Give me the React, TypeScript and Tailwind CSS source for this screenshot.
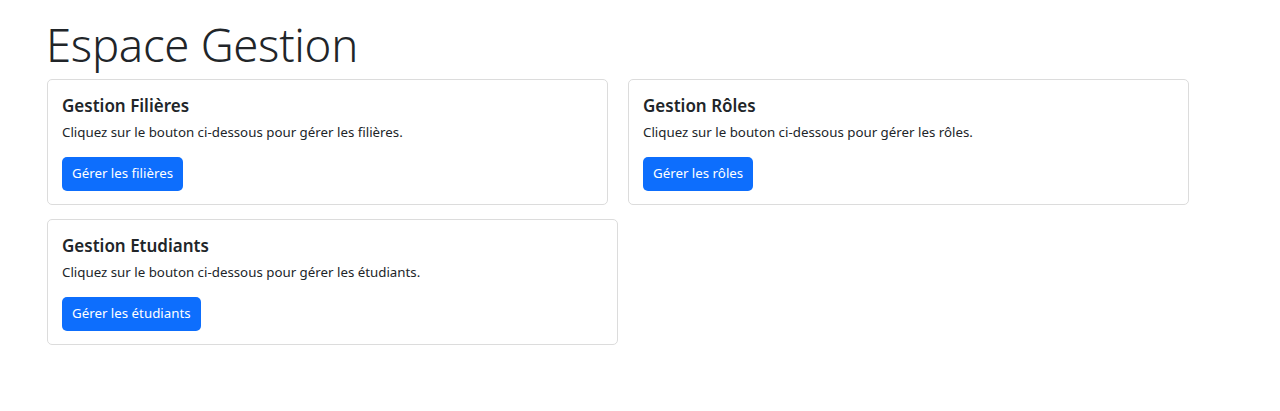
export default function App() {
  const cards = [
    { title: 'Gestion Filières', text: 'Cliquez sur le bouton ci-dessous pour gérer les filières.', label: 'Gérer les filières' },
    { title: 'Gestion Rôles', text: 'Cliquez sur le bouton ci-dessous pour gérer les rôles.', label: 'Gérer les rôles' },
  ]

  return (
    <div className="min-h-screen bg-white text-[#212529] font-['Noto_Sans',sans-serif] px-[47px] pt-[17px]">
      <h1 className="text-[45.5px] font-light leading-[55px] tracking-[-0.3px] -ml-[1px]">Espace Gestion</h1>

      {/* Row 1 */}
      <div className="flex gap-[20px] mt-[7px]">
        {cards.map((c) => (
          <Card key={c.title} title={c.title} text={c.text} label={c.label} width="w-[561px]" />
        ))}
      </div>

      {/* Row 2 */}
      <div className="flex mt-[14px]">
        <Card
          title="Gestion Etudiants"
          text="Cliquez sur le bouton ci-dessous pour gérer les étudiants."
          label="Gérer les étudiants"
          width="w-[571px]"
        />
      </div>
    </div>
  )
}

function Card({ title, text, label, width }: { title: string; text: string; label: string; width: string }) {
  return (
    <div className={`${width} h-[126px] border border-[#dcdcdc] rounded-[5px] px-[14px] pt-[15px]`}>
      <h5 className="text-[17px] font-semibold leading-[22px]">{title}</h5>
      <p className="text-[13.3px] leading-[20px] mt-[5px]">{text}</p>
      <button className="mt-[15px] h-[34px] px-[10px] rounded-[5px] bg-[#0d6efd] text-white text-[13.3px]">
        {label}
      </button>
    </div>
  )
}
